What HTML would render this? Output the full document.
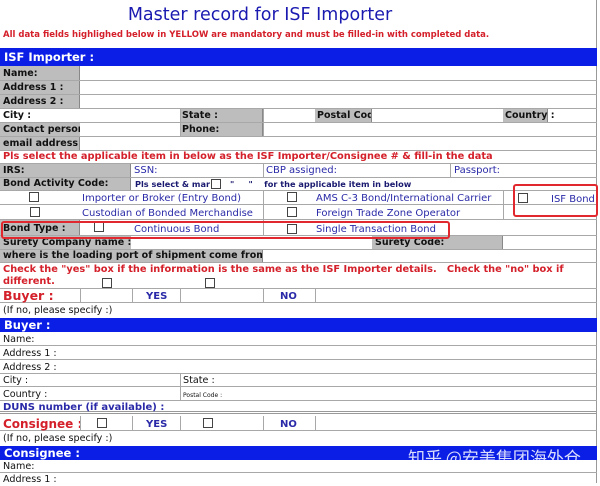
<!DOCTYPE html>
<html><head><meta charset="utf-8"><style>
*{margin:0;padding:0;box-sizing:border-box}
body{width:600px;height:483px;overflow:hidden;background:#fff;position:relative;font-family:"DejaVu Sans","Liberation Sans",sans-serif;}
div{position:absolute}
.r{left:0;width:597px;border-bottom:1px solid #a8a8a8}
.g{background:#bdbdbd;border-right:1px solid #888}
.t{font-size:9.5px;line-height:13px;white-space:nowrap;color:#111}
.b{font-weight:bold}
.bl{color:#2a2aa8;font-size:10px}
.rd{color:#d4202a}
.bar{left:0;width:597px;background:#0b1ee6;color:#fff;font-weight:bold;font-size:11.5px;line-height:15px;padding-left:4px}
.cb{width:10px;height:10px;border:1px solid #444;background:#fff}
.v{width:1px;background:#a8a8a8}
.box{border:2px solid #e0282e;border-radius:3px}
.n{font-size:9.6px}
</style></head><body>
<div style="left:0;top:2px;width:520px;text-align:center;font-size:17.5px;line-height:26px;color:#1a1ab0;font-family:'DejaVu Sans',sans-serif">Master record for ISF Importer</div>
<div class="t b rd" style="left:3px;top:28px;font-size:8.5px;line-height:14px">All data fields highlighed below in YELLOW are mandatory and must be filled-in with completed data.</div>
<div style="left:596px;top:0;width:1px;height:483px;background:#999"></div>
<div class="bar" style="top:48px;height:18px;line-height:18px">ISF Importer :</div>

<div class="r" style="top:66px;height:15px"></div><div class="g" style="left:0;top:66px;width:80px;height:14px"></div><div class="t b" style="left:3px;top:67px">Name:</div>
<div class="r" style="top:81px;height:14px"></div><div class="g" style="left:0;top:81px;width:80px;height:13px"></div><div class="t b" style="left:3px;top:81px">Address 1 :</div>
<div class="r" style="top:95px;height:14px"></div><div class="g" style="left:0;top:95px;width:80px;height:13px"></div><div class="t b" style="left:3px;top:95px">Address 2 :</div>
<div class="r" style="top:109px;height:14px"></div>
<div class="t b" style="left:3px;top:109px">City :</div>
<div class="g" style="left:180px;top:109px;width:83px;height:13px"></div><div class="t b" style="left:182px;top:109px">State :</div>
<div class="v" style="left:263px;top:109px;height:28px"></div>
<div class="g" style="left:315px;top:109px;width:57px;height:13px;overflow:hidden"><div class="t b" style="left:2px;top:0">Postal Code</div></div>
<div class="g" style="left:503px;top:109px;width:45px;height:13px"></div><div class="t b" style="left:505px;top:109px">Country :</div>
<div class="r" style="top:123px;height:14px"></div>
<div class="g" style="left:0;top:123px;width:80px;height:13px;overflow:hidden;border:0"><div class="t b" style="left:3px;top:0">Contact person</div></div>
<div class="g" style="left:180px;top:123px;width:83px;height:13px"></div><div class="t b" style="left:182px;top:123px">Phone:</div>
<div class="v" style="left:180px;top:109px;height:28px"></div>
<div class="r" style="top:137px;height:14px"></div><div class="g" style="left:0;top:137px;width:80px;height:13px;overflow:hidden"><div class="t b" style="left:3px;top:0">email address</div></div>
<div class="t b rd" style="left:3px;top:150px;font-size:9.8px;line-height:14px">Pls select the applicable item in below as the ISF Importer/Consignee # &amp; fill-in the data</div>

<div class="r" style="top:163px;height:15px;border-top:1px solid #a8a8a8"></div>
<div class="g" style="left:0;top:164px;width:131px;height:13px"></div><div class="t b" style="left:3px;top:164px">IRS:</div>
<div class="t bl" style="left:134px;top:164px">SSN:</div><div class="v" style="left:263px;top:164px;height:14px"></div>
<div class="t bl" style="left:266px;top:164px">CBP assigned:</div><div class="v" style="left:450px;top:164px;height:14px"></div>
<div class="t bl" style="left:454px;top:164px">Passport:</div>

<div class="r" style="top:178px;height:13px"></div>
<div class="g" style="left:0;top:178px;width:131px;height:12px"></div><div class="t b" style="left:3px;top:177px">Bond Activity Code:</div>
<div class="t b" style="left:135px;top:178px;font-size:8.2px;color:#1a1a70">Pls select &amp; mar</div><div class="cb" style="left:211px;top:179px"></div>
<div class="t b" style="left:230px;top:178px;font-size:8.2px;color:#1a1a70">"&nbsp;&nbsp;&nbsp;&nbsp;&nbsp;"&nbsp;&nbsp;&nbsp; for the applicable item in below</div>

<div class="r" style="top:191px;height:14px"></div>
<div class="cb" style="left:29px;top:192px"></div><div class="t bl" style="left:82px;top:192px">Importer or Broker (Entry Bond)</div>
<div class="v" style="left:263px;top:191px;height:28px"></div>
<div class="cb" style="left:287px;top:192px"></div><div class="t bl" style="left:316px;top:192px">AMS C-3 Bond/International Carrier</div>
<div class="v" style="left:503px;top:191px;height:28px"></div>
<div class="cb" style="left:518px;top:193px"></div><div class="t bl" style="left:551px;top:193px">ISF Bond</div>
<div class="r" style="top:205px;height:15px"></div>
<div class="cb" style="left:30px;top:207px"></div><div class="t bl" style="left:82px;top:207px">Custodian of Bonded Merchandise</div>
<div class="cb" style="left:287px;top:207px"></div><div class="t bl" style="left:316px;top:207px">Foreign Trade Zone Operator</div>

<div class="r" style="top:220px;height:16px"></div>
<div class="g" style="left:0;top:220px;width:80px;height:15px"></div><div class="t b" style="left:3px;top:222px">Bond Type :</div>
<div class="cb" style="left:94px;top:222px"></div><div class="t bl" style="left:134px;top:223px">Continuous Bond</div>
<div class="v" style="left:263px;top:220px;height:16px"></div>
<div class="cb" style="left:287px;top:224px"></div><div class="t bl" style="left:316px;top:223px">Single Transaction Bond</div>

<div class="r" style="top:236px;height:14px"></div>
<div class="g" style="left:0;top:236px;width:131px;height:13px;border:0"></div><div class="t b" style="left:3px;top:236px">Surety Company name :</div>
<div class="g" style="left:372px;top:236px;width:131px;height:13px"></div><div class="t b" style="left:375px;top:236px">Surety Code:</div>
<div class="r" style="top:250px;height:13px"></div>
<div class="g" style="left:0;top:250px;width:263px;height:12px;overflow:hidden"><div class="t b" style="left:3px;top:-1px">where is the loading port of shipment come from</div></div>
<div class="t b rd" style="left:3px;top:264px;font-size:9.8px;line-height:12px;width:575px;white-space:normal">Check the "yes" box if the information is the same as the ISF Importer details. &nbsp; Check the "no" box if different.</div>
<div class="cb" style="left:102px;top:278px"></div><div class="cb" style="left:205px;top:278px"></div>

<div class="r" style="top:288px;height:15px;border-top:1px solid #a8a8a8"></div>
<div class="t b rd" style="left:3px;top:289px;font-size:12.5px;line-height:14px">Buyer :</div>
<div class="v" style="left:80px;top:289px;height:14px"></div><div class="v" style="left:132px;top:289px;height:14px"></div>
<div class="t b bl" style="left:146px;top:290px">YES</div>
<div class="v" style="left:180px;top:289px;height:14px"></div><div class="v" style="left:263px;top:289px;height:14px"></div>
<div class="t b bl" style="left:280px;top:290px">NO</div><div class="v" style="left:315px;top:289px;height:14px"></div>
<div class="t n" style="left:3px;top:304px">(If no, please specify :)</div>
<div class="bar" style="top:318px;height:14px;line-height:14px">Buyer :</div>
<div class="r" style="top:332px;height:14px"></div><div class="t n" style="left:3px;top:333px">Name:</div>
<div class="r" style="top:346px;height:14px"></div><div class="t n" style="left:3px;top:347px">Address 1 :</div>
<div class="r" style="top:360px;height:14px"></div><div class="t n" style="left:3px;top:361px">Address 2 :</div>
<div class="r" style="top:374px;height:13px"></div><div class="t n" style="left:3px;top:374px">City :</div>
<div class="v" style="left:180px;top:374px;height:27px"></div><div class="t n" style="left:183px;top:374px">State :</div>
<div class="r" style="top:387px;height:14px"></div><div class="t n" style="left:3px;top:388px">Country :</div>
<div class="t" style="left:183px;top:389px;font-size:6px">Postal Code :</div>
<div class="r" style="top:401px;height:13px;border-bottom:3px double #999"></div>
<div class="t b bl" style="left:3px;top:401px">DUNS number (if available) :</div>

<div class="r" style="top:416px;height:15px"></div>
<div class="t b rd" style="left:3px;top:417px;font-size:12px;line-height:14px">Consignee :</div>
<div class="v" style="left:80px;top:416px;height:15px"></div><div class="cb" style="left:97px;top:418px"></div>
<div class="v" style="left:132px;top:416px;height:15px"></div><div class="t b bl" style="left:146px;top:418px">YES</div>
<div class="v" style="left:180px;top:416px;height:15px"></div><div class="cb" style="left:203px;top:418px"></div>
<div class="v" style="left:263px;top:416px;height:15px"></div><div class="t b bl" style="left:280px;top:418px">NO</div>
<div class="v" style="left:315px;top:416px;height:15px"></div>
<div class="t n" style="left:3px;top:432px">(If no, please specify :)</div>
<div class="bar" style="top:446px;height:14px;line-height:14px">Consignee :</div>
<div class="t" style="left:408px;top:446px;font-size:17px;line-height:22px;color:rgba(255,255,255,0.85);font-family:'Noto Sans CJK SC',sans-serif">知乎 @安美集团海外仓</div>
<div class="r" style="top:460px;height:13px"></div><div class="t n" style="left:3px;top:460px">Name:</div>
<div class="t n" style="left:3px;top:473px">Address 1 :</div>

<div class="box" style="left:513px;top:184px;width:85px;height:33px"></div>
<div class="box" style="left:1px;top:221px;width:449px;height:18px"></div>
</body></html>
